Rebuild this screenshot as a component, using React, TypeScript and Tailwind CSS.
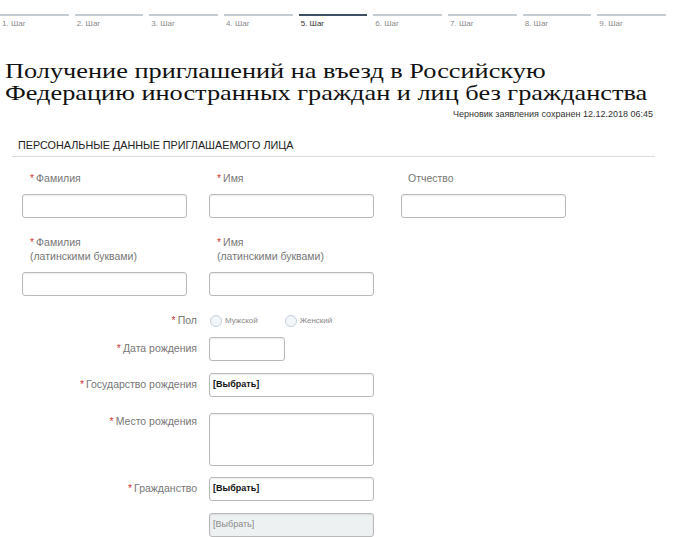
import React from "react";

const steps = ["1. Шаг", "2. Шаг", "3. Шаг", "4. Шаг", "5. Шаг", "6. Шаг", "7. Шаг", "8. Шаг", "9. Шаг"];

function Req() {
  return <span className="text-[#d04040] mr-[2px]">*</span>;
}

function Input({ w = "w-[165px]", h = "h-[24px]", children, disabled }: { w?: string; h?: string; children?: React.ReactNode; disabled?: boolean }) {
  return (
    <div
      className={`${w} ${h} rounded-[3px] border border-[#b9b9b9] shadow-[inset_0_1px_2px_rgba(0,0,0,0.08)] flex items-center px-[3px] text-[9px] font-bold ${
        disabled ? "bg-[#eef1f2] text-[#8a8a8a] font-normal" : "bg-white text-[#111]"
      }`}
    >
      {children}
    </div>
  );
}

function Radio({ label }: { label: string }) {
  return (
    <div className="flex items-center gap-[3px]">
      <div className="w-[12px] h-[12px] rounded-full border border-[#c5d0dc] bg-[#f3f6f9]" />
      <span className="text-[8px] text-[#888]">{label}</span>
    </div>
  );
}

export default function App() {
  return (
    <div className="w-[675px] h-[537px] overflow-hidden bg-white" style={{ fontFamily: '"Liberation Sans", Arial, sans-serif' }}>
      {/* steps */}
      <div className="grid grid-cols-9 gap-x-[6px] w-[666px] pt-[14px]">
        {steps.map((s, i) => (
          <div key={s}>
            <div className={`h-[2px] ${i === 4 ? "bg-[#3c4f63]" : "bg-[#c3ccd3]"}`} />
            <div className={`text-[8px] leading-[10px] mt-[3px] pl-[2px] ${i === 4 ? "text-[#333]" : "text-[#8a8a8a]"}`}>{s}</div>
          </div>
        ))}
      </div>

      {/* title */}
      <div className="pl-[5px] mt-[31px] text-[22px] leading-[22px] text-[#111] whitespace-nowrap" style={{ fontFamily: '"Liberation Serif", "Times New Roman", serif' }}>
        <div className="origin-left scale-x-[1.196]">Получение приглашений на въезд в Российскую</div>
        <div className="origin-left scale-x-[1.196]">Федерацию иностранных граждан и лиц без гражданства</div>
      </div>
      <div className="w-[653px] mt-[5px] text-right text-[9px] leading-[10px] text-[#333]">Черновик заявления сохранен 12.12.2018 06:45</div>

      {/* section header */}
      <div className="ml-[12px] w-[643px] mt-[20px] border-b border-[#dcdcdc] pb-[5px] pl-[6px] text-[10.8px] leading-[12px] text-[#222] uppercase">
        Персональные данные приглашаемого лица
      </div>

      {/* row 1 */}
      <div className="flex ml-[22px] mt-[14px] text-[10.5px] text-[#777]">
        <div className="w-[165px]">
          <div className="pl-[8px] leading-[14px]"><Req />Фамилия</div>
          <div className="mt-[9px]"><Input /></div>
        </div>
        <div className="w-[165px] ml-[22px]">
          <div className="pl-[8px] leading-[14px]"><Req />Имя</div>
          <div className="mt-[9px]"><Input /></div>
        </div>
        <div className="w-[165px] ml-[27px]">
          <div className="pl-[7px] leading-[14px]">Отчество</div>
          <div className="mt-[9px]"><Input /></div>
        </div>
      </div>

      {/* row 2 */}
      <div className="flex ml-[22px] mt-[17px] text-[10.5px] text-[#777]">
        <div className="w-[165px]">
          <div className="pl-[8px] leading-[14px]"><Req />Фамилия<br />(латинскими буквами)</div>
          <div className="mt-[9px]"><Input /></div>
        </div>
        <div className="w-[165px] ml-[22px]">
          <div className="pl-[8px] leading-[14px]"><Req />Имя<br />(латинскими буквами)</div>
          <div className="mt-[9px]"><Input /></div>
        </div>
      </div>

      {/* right-aligned rows */}
      <div className="flex flex-col text-[10.5px] text-[#777] mt-[18px]">
        <div className="flex items-center h-[14px]">
          <div className="w-[197px] text-right"><Req />Пол</div>
          <div className="ml-[13px] flex items-center">
            <Radio label="Мужской" />
            <div className="ml-[27px]"><Radio label="Женский" /></div>
          </div>
        </div>
        <div className="flex items-center mt-[9px]">
          <div className="w-[197px] text-right"><Req />Дата рождения</div>
          <div className="ml-[12px]"><Input w="w-[76px]" /></div>
        </div>
        <div className="flex items-center mt-[12px]">
          <div className="w-[197px] text-right"><Req />Государство рождения</div>
          <div className="ml-[12px]"><Input>[Выбрать]</Input></div>
        </div>
        <div className="flex items-start mt-[16px]">
          <div className="w-[197px] text-right pt-[1px]"><Req />Место рождения</div>
          <div className="ml-[12px]"><Input h="h-[53px]" /></div>
        </div>
        <div className="flex items-center mt-[11px]">
          <div className="w-[197px] text-right"><Req />Гражданство</div>
          <div className="ml-[12px]"><Input>[Выбрать]</Input></div>
        </div>
        <div className="flex items-center mt-[12px]">
          <div className="w-[197px]" />
          <div className="ml-[12px]"><Input disabled>[Выбрать]</Input></div>
        </div>
      </div>
    </div>
  );
}
